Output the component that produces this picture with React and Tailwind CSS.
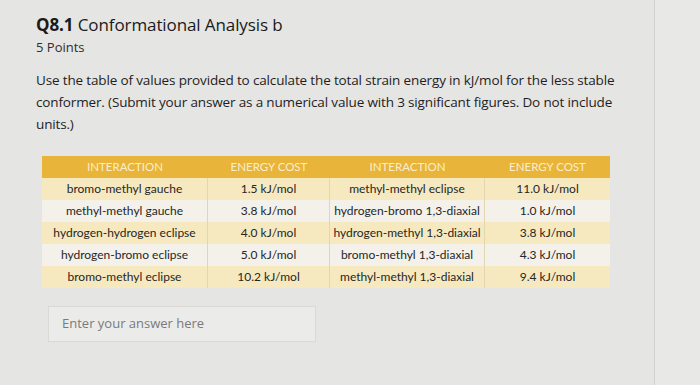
import React from 'react';

const left = [
  ['bromo-methyl gauche', '1.5 kJ/mol'],
  ['methyl-methyl gauche', '3.8 kJ/mol'],
  ['hydrogen-hydrogen eclipse', '4.0 kJ/mol'],
  ['hydrogen-bromo eclipse', '5.0 kJ/mol'],
  ['bromo-methyl eclipse', '10.2 kJ/mol'],
];

const right = [
  ['methyl-methyl eclipse', '11.0 kJ/mol'],
  ['hydrogen-bromo 1,3-diaxial', '1.0 kJ/mol'],
  ['hydrogen-methyl 1,3-diaxial', '3.8 kJ/mol'],
  ['bromo-methyl 1,3-diaxial', '4.3 kJ/mol'],
  ['methyl-methyl 1,3-diaxial', '9.4 kJ/mol'],
];

const Cell = ({ children, className = '' }) => (
  <div className={`h-[22px] flex items-center justify-center text-[12px] text-[#262626] border-r border-[#e2d6b0] ${className}`}>
    {children}
  </div>
);

export default function App() {
  return (
    <div className="w-[700px] h-[385px] overflow-hidden bg-[#e5e5e3] flex" style={{ fontFamily: '"Open Sans", Lato, sans-serif' }}>
      <div className="w-[655px] h-full border-r border-[#d2d2d0] pl-[36px] pt-[13px]">
        <h1 className="text-[17px] leading-[24px] text-[#1a1a1a] tracking-[-0.1px]">
          <span className="font-bold">Q8.1</span> Conformational Analysis b
        </h1>
        <div className="text-[13px] leading-[18px] text-[#2e2e2e] mt-[1px]">5 Points</div>

        <p className="text-[13.5px] leading-[22px] text-[#1e1e1e] mt-[13px] w-[590px] tracking-[-0.15px]">
          Use the table of values provided to calculate the total strain energy in kJ/mol for the less stable conformer. (Submit your answer as a numerical value with 3 significant figures. Do not include units.)
        </p>

        <div className="ml-[6px] mt-[21px] w-[568px] grid grid-cols-[166px_122px_155px_125px]" style={{ fontFamily: 'Lato, "Open Sans", sans-serif' }}>
          {['INTERACTION', 'ENERGY COST', 'INTERACTION', 'ENERGY COST'].map((h, i) => (
            <div key={i} className="h-[22px] bg-[#e8b43a] flex items-center justify-center text-[11.5px] text-[#fbeecb] uppercase">
              {h}
            </div>
          ))}
          {left.map((row, i) => {
            const bg = i % 2 === 0 ? 'bg-[#f6e9c0]' : 'bg-[#f3f1ea]';
            return (
              <React.Fragment key={i}>
                <Cell className={bg}>{row[0]}</Cell>
                <Cell className={bg}>{row[1]}</Cell>
                <Cell className={bg}>{right[i][0]}</Cell>
                <Cell className={`${bg} border-r-0`}>{right[i][1]}</Cell>
              </React.Fragment>
            );
          })}
        </div>

        <div className="ml-[12px] mt-[18px] w-[268px] h-[36px] bg-[#ebebea] border border-[#d9d9d7] flex items-center px-[13px] text-[13px] text-[#7a7a7a]">
          Enter your answer here
        </div>
      </div>
      <div className="flex-1 bg-[#e8e8e6]" />
    </div>
  );
}
